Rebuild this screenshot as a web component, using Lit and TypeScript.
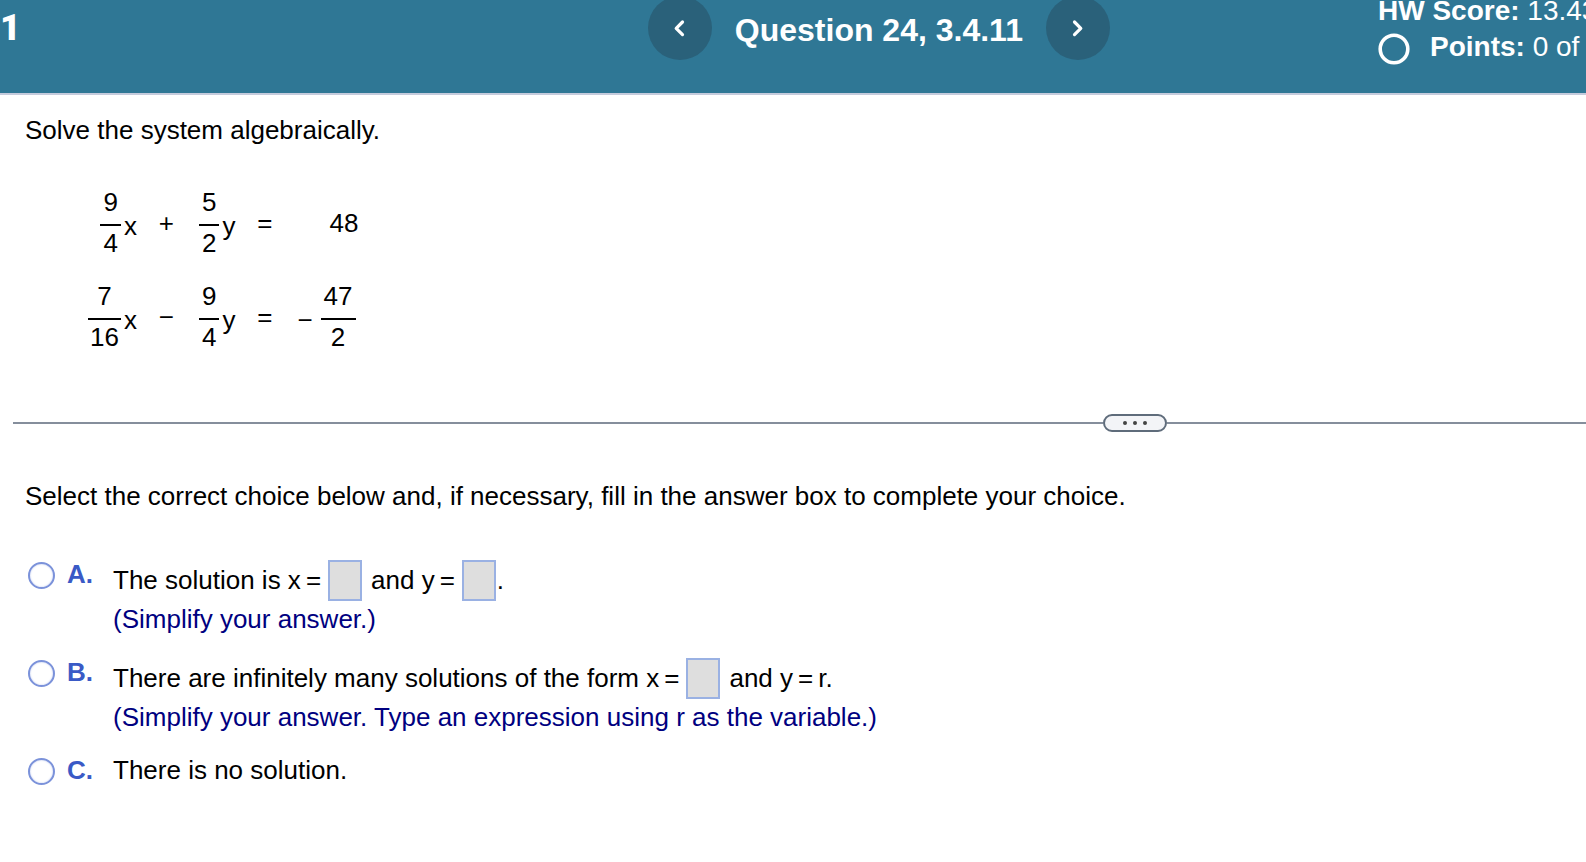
import { LitElement, html, css, nothing, TemplateResult } from "lit";
import { customElement, property, state } from "lit/decorators.js";

@customElement("math-fraction")
class MathFraction extends LitElement {
  static styles = css`
    :host {
      display: inline-flex;
      flex-direction: column;
      margin-right: 3px;
      text-align: center;
      line-height: 24px;
    }
    .num {
      padding: 0 3px 10px;
      border-bottom: 2px solid #000;
    }
    .den {
      padding: 5px 2px 0;
    }
  `;
  @property() num = "";
  @property() den = "";
  render() {
    return html`<span class="num">${this.num}</span><span class="den">${this.den}</span>`;
  }
}

@customElement("question-header")
class QuestionHeader extends LitElement {
  static styles = css`
    :host {
      display: grid;
      grid-template-columns: 29fr auto 12fr 208px;
      height: 93px;
      overflow: hidden;
      background: #2f7795;
      border-bottom: 2px solid #c5cbdc;
      color: #fff;
      white-space: nowrap;
    }
    .part {
      font: 900 36px/56px Roboto, "Liberation Sans", sans-serif;
    }
    .nav {
      display: flex;
      align-items: center;
      gap: 23px;
      height: 56px;
    }
    .title {
      margin: 0;
      padding-top: 3px;
      font-size: 32px;
      line-height: 36px;
      font-weight: 700;
    }
    .step {
      display: grid;
      place-items: center;
      flex: none;
      width: 64px;
      height: 64px;
      padding: 0;
      border: 0;
      border-radius: 50%;
      background: #2a617a;
      color: #fff;
    }
    .score {
      grid-column: 4;
      font-size: 28px;
      line-height: 36px;
      margin-top: -7px;
    }
    .score p {
      margin: 0;
    }
    .points {
      display: flex;
      gap: 20px;
    }
    .ring {
      flex: none;
      margin-top: 4px;
    }
  `;
  render() {
    return html`
      <span class="part">1</span>
      <nav class="nav" aria-label="Question">
        <button class="step" aria-label="Previous question">
          <svg width="16" height="20" viewBox="0 0 16 20" fill="none" stroke="currentColor" stroke-width="3.2" stroke-linecap="round" stroke-linejoin="round">
            <path d="M10.500 4 4.200 10.300l6.300 6.300" />
          </svg>
        </button>
        <h1 class="title">Question 24, 3.4.11</h1>
        <button class="step" aria-label="Next question">
          <svg width="16" height="20" viewBox="0 0 16 20" fill="none" stroke="currentColor" stroke-width="3.2" stroke-linecap="round" stroke-linejoin="round">
            <path d="M4.500 4 10.800 10.300l-6.300 6.300" />
          </svg>
        </button>
      </nav>
      <div class="score">
        <p><b>HW Score:</b> 13.43%</p>
        <p class="points">
          <svg class="ring" width="32" height="32" viewBox="0 0 32 32" aria-hidden="true">
            <circle cx="16" cy="16" r="13.800" fill="none" stroke="#fff" stroke-width="3.600" />
          </svg>
          <span><b>Points:</b> 0 of 4</span>
        </p>
      </div>
    `;
  }
}

type Choice = { id: string; line: TemplateResult; hint?: string };

@customElement("app-root")
class AppRoot extends LitElement {
  static styles = css`
    :host {
      display: block;
      overflow: hidden;
      background: #fff;
      color: #000;
      font: 26px/30px "Liberation Sans", Arial, sans-serif;
    }
    .text {
      margin: 0;
      padding: 0 25px;
    }
    .prompt {
      padding-top: 20px;
    }
    .system {
      display: grid;
      grid-template-columns: auto 62px auto 62px auto;
      justify-content: start;
      align-items: center;
      row-gap: 29px;
      margin: 45px 0 65px;
      padding-left: 88px;
      line-height: 24px;
    }
    .term {
      display: flex;
      align-items: center;
      justify-self: end;
    }
    .shift {
      padding-top: 7px;
    }
    .neg {
      margin-right: 8px;
    }
    .op {
      padding-right: 3px;
      text-align: center;
    }
    .divider {
      display: flex;
      align-items: center;
      margin-left: 13px;
    }
    .rule {
      height: 2px;
      background: #858e9c;
    }
    .before {
      flex: 13;
    }
    .after {
      flex: 5;
    }
    .grip {
      display: flex;
      align-items: center;
      justify-content: center;
      gap: 6px;
      width: 64px;
      height: 18px;
      padding: 0;
      border: 2px solid #5f6c7b;
      border-radius: 9px;
      background: #f3f4f7;
    }
    .dot {
      width: 4px;
      height: 4px;
      border-radius: 50%;
      background: #444;
    }
    .instruction {
      padding-top: 49px;
    }
    .choices {
      display: grid;
      row-gap: 23px;
      margin: 0;
      padding: 48px 28px;
      border: 0;
    }
    .choice {
      display: grid;
      grid-template-columns: 39px 46px 1fr;
      align-items: start;
    }
    .radio {
      appearance: none;
      box-sizing: border-box;
      width: 27px;
      height: 27px;
      margin: 3px 0 0;
      border: 2px solid #7b92da;
      border-radius: 50%;
      background: #fff;
      box-shadow: inset 0 0 2px #b9c5ec;
    }
    .radio:checked {
      background: radial-gradient(#3a5ac6 40%, #fff 45%);
    }
    .letter {
      color: #3a5ac6;
      font-weight: 700;
    }
    .line {
      display: flex;
      align-items: center;
      white-space: pre;
    }
    .filled {
      min-height: 42px;
    }
    .eq {
      margin: 0 7px 0 5px;
    }
    .tight {
      margin-right: 5px;
    }
    .blank {
      box-sizing: border-box;
      width: 34px;
      height: 41px;
      margin: 0;
      padding: 0 2px;
      border: 2px solid #9ab1e3;
      border-radius: 0;
      background: #dedede;
      font: inherit;
    }
    .then {
      margin-left: 9px;
    }
    .stop {
      margin-left: 1px;
    }
    .hint {
      margin: 3px 0 0;
      color: #000080;
    }
  `;

  @state() private selected = "";

  private choices: Choice[] = [
    {
      id: "A",
      line: html`<span>The solution is x</span><span class="eq">=</span
        ><input class="blank" aria-label="x value" /><span class="then">and y</span
        ><span class="eq">=</span><input class="blank" aria-label="y value" /><span class="stop">.</span>`,
      hint: "(Simplify your answer.)",
    },
    {
      id: "B",
      line: html`<span>There are infinitely many solutions of the form x</span><span class="eq">=</span
        ><input class="blank" aria-label="x in terms of r" /><span class="then">and y</span
        ><span class="eq tight">=</span><span>r.</span>`,
      hint: "(Simplify your answer. Type an expression using r as the variable.)",
    },
    { id: "C", line: html`<span>There is no solution.</span>` },
  ];

  private term(num: string, den: string, name: string) {
    return html`<span class="term"
      ><math-fraction num=${num} den=${den}></math-fraction><span class="shift">${name}</span></span
    >`;
  }

  render() {
    return html`
      <question-header></question-header>
      <main>
        <p class="text prompt">Solve the system algebraically.</p>
        <div class="system">
          ${this.term("9", "4", "x")}<span class="op">+</span>${this.term("5", "2", "y")}
          <span class="op">=</span><span class="term">48</span>
          ${this.term("7", "16", "x")}<span class="op">−</span>${this.term("9", "4", "y")}
          <span class="op">=</span>
          <span class="term"><span class="shift neg">−</span><math-fraction num="47" den="2"></math-fraction></span>
        </div>
        <div class="divider">
          <span class="rule before"></span>
          <button class="grip" aria-label="Resize panels">
            <span class="dot"></span><span class="dot"></span><span class="dot"></span>
          </button>
          <span class="rule after"></span>
        </div>
        <p class="text instruction">
          Select the correct choice below and, if necessary, fill in the answer box to complete your choice.
        </p>
        <fieldset class="choices" aria-label="Answer choices">
          ${this.choices.map(
            (c) => html`
              <div class="choice">
                <input
                  class="radio"
                  type="radio"
                  name="answer"
                  id="choice-${c.id}"
                  .checked=${this.selected === c.id}
                  @change=${() => (this.selected = c.id)}
                />
                <label class="letter" for="choice-${c.id}">${c.id}.</label>
                <div>
                  <div class="line ${c.hint ? "filled" : ""}">${c.line}</div>
                  ${c.hint ? html`<p class="hint">${c.hint}</p>` : nothing}
                </div>
              </div>
            `
          )}
        </fieldset>
      </main>
    `;
  }
}
